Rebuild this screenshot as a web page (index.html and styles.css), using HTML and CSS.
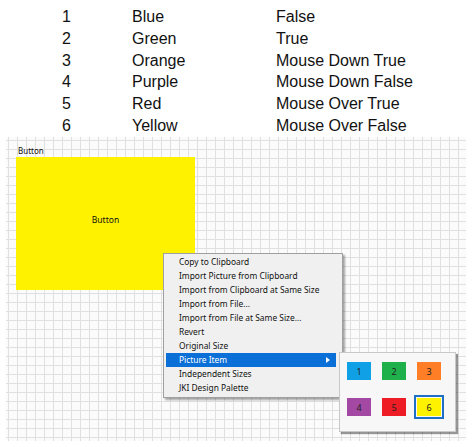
FILE: index.html
```html
<!DOCTYPE html>
<html>
<head>
<meta charset="utf-8">
<link rel="stylesheet" href="styles.css">
</head>
<body>
<div class="legend">
  <span>1</span><span>Blue</span><span>False</span>
  <span>2</span><span>Green</span><span>True</span>
  <span>3</span><span>Orange</span><span>Mouse Down True</span>
  <span>4</span><span>Purple</span><span>Mouse Down False</span>
  <span>5</span><span>Red</span><span>Mouse Over True</span>
  <span>6</span><span>Yellow</span><span>Mouse Over False</span>
</div>
<div class="canvas">
  <div class="label">Button</div>
  <div class="button">Button</div>
  <div class="menu">
    <div class="item">Copy to Clipboard</div>
    <div class="item">Import Picture from Clipboard</div>
    <div class="item">Import from Clipboard at Same Size</div>
    <div class="item">Import from File...</div>
    <div class="item">Import from File at Same Size...</div>
    <div class="item">Revert</div>
    <div class="item">Original Size</div>
    <div class="item active">Picture Item<span class="arrow"></span></div>
    <div class="item">Independent Sizes</div>
    <div class="item">JKI Design Palette</div>
  </div>
  <div class="submenu">
    <div class="sw blue">1</div>
    <div class="sw green">2</div>
    <div class="sw orange">3</div>
    <div class="sw purple">4</div>
    <div class="sw red">5</div>
    <div class="sw yellow sel">6</div>
  </div>
</div>
</body>
</html>
```
FILE: styles.css
```css
html, body { margin: 0; padding: 0; background: #fff; }
body { width: 474px; height: 447px; overflow: hidden; font-family: "Liberation Sans", Arial, sans-serif; }
.legend {
  display: grid;
  grid-template-columns: 70px 144px 1fr;
  padding: 6px 0 0 62px;
  font-size: 16px;
  line-height: 21.5px;
  color: #111;
  height: 137px;
  box-sizing: border-box;
}
.canvas {
  position: relative;
  margin-left: 6px;
  width: 460px;
  height: 304px;
  background-color: #fbfbfb;
  background-image:
    linear-gradient(to right, #e0e0e0 1px, transparent 1px),
    linear-gradient(to bottom, #e0e0e0 1px, transparent 1px);
  background-size: 9px 9px;
  background-position: 2px 3px;
  font-family: "Noto Sans", "Open Sans", sans-serif;
  color: #111;
}
.label { position: absolute; left: 12px; top: 8px; font-size: 8px; line-height: 11px; }
.button {
  position: absolute; left: 10px; top: 20px; width: 179px; height: 133px;
  box-sizing: border-box;
  padding-bottom: 9px;
  background: #fff200;
  display: flex; align-items: center; justify-content: center;
  font-size: 8.5px;
}
.menu {
  position: absolute; left: 157px; top: 116px; width: 178px;
  background: #f0f0f0;
  border: 1px solid #a0a0a0;
  box-shadow: 2px 2px 2px rgba(0,0,0,0.35);
  padding: 1px 0 2px 0;
}
.item {
  position: relative;
  height: 14px; line-height: 14px;
  padding-left: 13px;
  font-size: 8.4px;
  margin: 0 2px;
  white-space: nowrap;
}
.item.active { background: #0a6fd6; color: #fff; margin-right: 6px; }
.arrow {
  position: absolute; right: 6px; top: 4px;
  border-left: 4px solid #fff; border-top: 3px solid transparent; border-bottom: 3px solid transparent;
}
.submenu {
  position: absolute; left: 333px; top: 215px; width: 117px; height: 80px;
  box-sizing: border-box;
  background: #f7f7f7;
  border: 1px solid #c8c8c8;
  box-shadow: 2px 2px 1px rgba(0,0,0,0.4);
  display: grid;
  grid-template-columns: repeat(3, 24px);
  grid-template-rows: 18px 18px;
  column-gap: 11px;
  row-gap: 18px;
  padding: 9px 0 0 7px;
}
.sw {
  display: flex; align-items: center; justify-content: center;
  font-size: 9px; color: #222;
}
.blue { background: #10a0e6; }
.green { background: #1fb04c; }
.orange { background: #ff7e26; }
.purple { background: #a349a4; }
.red { background: #ee1c25; }
.yellow { background: #fff200; }
.sel { outline: 2px solid #1f6fc4; outline-offset: 1px; }
```
